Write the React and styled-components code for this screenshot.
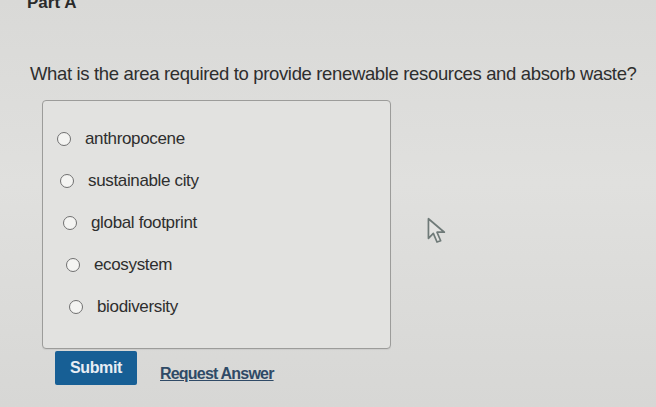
import styled, { createGlobalStyle } from "styled-components";

const Global = createGlobalStyle`
  html, body { margin: 0; padding: 0; }
  body {
    background: #dcdcda;
    font-family: "Liberation Sans", Arial, sans-serif;
    overflow: hidden;
  }
`;

const Page = styled.div`
  width: 656px;
  height: 407px;
  position: relative;
  background: linear-gradient(180deg, #d9d9d7 0%, #e0e0de 45%, #d7d7d5 100%);
  padding: 0 0 0 30px;
  box-sizing: border-box;
  overflow: hidden;
`;

const PartTitle = styled.div`
  margin: -7px 0 0 -3px;
  font-size: 17px;
  font-weight: 700;
  color: #2a2a2a;
  height: 17px;
`;

const Question = styled.p`
  margin: 54px 0 0 0;
  font-size: 18.5px;
  color: #2e2e2e;
  letter-spacing: -0.35px;
  line-height: 20px;
`;

const OptionsBox = styled.div`
  margin: 16px 0 0 12px;
  width: 349px;
  height: 249px;
  box-sizing: border-box;
  border: 1px solid #9c9c9a;
  border-radius: 4px;
  padding: 27px 0 0 14px;
  display: flex;
  flex-direction: column;
  gap: 20px;
  background: #e2e2e0;
  box-shadow: 0 1px 1px rgba(0, 0, 0, 0.06);
`;

const Option = styled.label`
  display: flex;
  align-items: center;
  gap: 14px;
  height: 22px;
  padding-left: ${(p) => p.$shift}px;
  font-size: 17px;
  color: #2e2e2e;
  letter-spacing: -0.35px;
`;

const Radio = styled.span`
  width: 12px;
  height: 12px;
  border: 1.5px solid #707070;
  border-radius: 50%;
  background: #f4f4f2;
  flex: none;
`;

const Actions = styled.div`
  margin: 2px 0 0 25px;
  display: flex;
  align-items: center;
  gap: 23px;
`;

const SubmitButton = styled.button`
  width: 82px;
  height: 34px;
  border: none;
  border-radius: 2px;
  background: #175f95;
  color: #e8eef4;
  font-family: "Liberation Sans", Arial, sans-serif;
  font-size: 16px;
  font-weight: 700;
  letter-spacing: -0.4px;
  padding: 0;
`;

const RequestLink = styled.a`
  margin-top: 12px;
  font-size: 16px;
  font-weight: 700;
  color: #2f4a66;
  text-decoration: underline;
  letter-spacing: -0.8px;
`;

const Cursor = styled.svg`
  position: absolute;
  left: 426px;
  top: 216px;
`;

const options = [
  "anthropocene",
  "sustainable city",
  "global footprint",
  "ecosystem",
  "biodiversity",
];

export default function App() {
  return (
    <Page>
      <Global />
      <PartTitle>Part A</PartTitle>
      <Question>
        What is the area required to provide renewable resources and absorb waste?
      </Question>
      <OptionsBox>
        {options.map((o, i) => (
          <Option key={o} $shift={i * 3}>
            <Radio />
            {o}
          </Option>
        ))}
      </OptionsBox>
      <Actions>
        <SubmitButton>Submit</SubmitButton>
        <RequestLink>Request Answer</RequestLink>
      </Actions>
      <Cursor width="22" height="30" viewBox="0 0 18 24">
        <path
          d="M2 2 L2 18 L6 14 L9 21 L12 20 L9 13 L15 13 Z"
          fill="#e4e4e2"
          stroke="#6f7a78"
          strokeWidth="1.4"
          strokeLinejoin="round"
        />
      </Cursor>
    </Page>
  );
}
